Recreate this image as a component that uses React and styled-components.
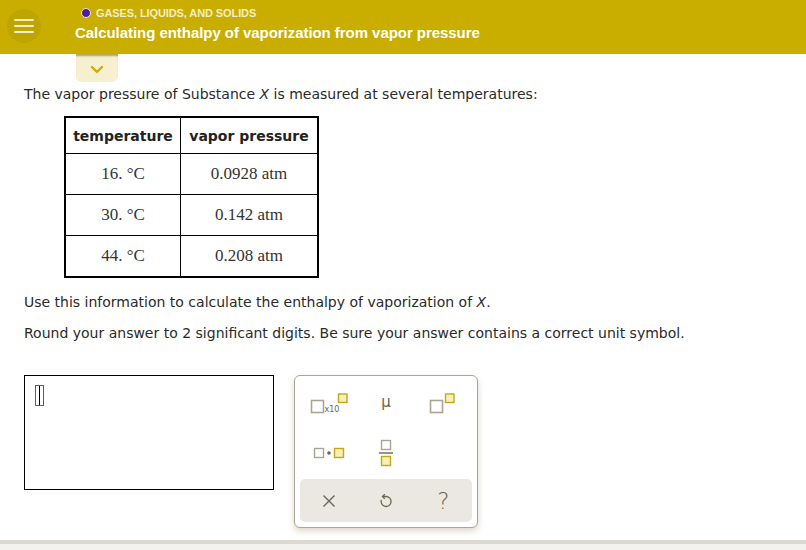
import React from 'react';
import styled, { createGlobalStyle } from 'styled-components';

const Global = createGlobalStyle`
  html, body { margin: 0; padding: 0; background: #fff; }
  body { width: 806px; height: 550px; overflow: hidden; font-family: "DejaVu Sans", Verdana, sans-serif; }
`;

const rows = [
  ['16. °C', '0.0928 atm'],
  ['30. °C', '0.142 atm'],
  ['44. °C', '0.208 atm'],
];

const App = () => (
  <Page>
    <Global />
    <Header>
      <MenuButton>
        <svg width="20" height="14" viewBox="0 0 20 14">
          <path d="M1 1h18M1 7h18M1 13h18" stroke="#f3ecc4" strokeWidth="2" strokeLinecap="round" />
        </svg>
      </MenuButton>
      <Titles>
        <Topic><Dot />GASES, LIQUIDS, AND SOLIDS</Topic>
        <Title>Calculating enthalpy of vaporization from vapor pressure</Title>
      </Titles>
    </Header>
    <TabRow>
      <Tab>
        <svg width="14" height="9" viewBox="0 0 14 9">
          <path d="M2 2l5 5 5-5" stroke="#c9ae00" strokeWidth="2.4" fill="none" strokeLinecap="round" strokeLinejoin="round" />
        </svg>
      </Tab>
    </TabRow>
    <Content>
      <Para>The vapor pressure of Substance <Var>X</Var> is measured at several temperatures:</Para>
      <Table>
        <thead>
          <tr>
            <Th>temperature</Th>
            <Th>vapor pressure</Th>
          </tr>
        </thead>
        <tbody>
          {rows.map(([t, p]) => (
            <tr key={t}>
              <Td>{t}</Td>
              <Td>{p}</Td>
            </tr>
          ))}
        </tbody>
      </Table>
      <Para $top={15}>Use this information to calculate the enthalpy of vaporization of <Var>X</Var>.</Para>
      <Para $top={13}>Round your answer to 2 significant digits. Be sure your answer contains a correct unit symbol.</Para>
      <AnswerRow>
        <AnswerBox>
          <Cursor><CursorBar /></Cursor>
        </AnswerBox>
        <Palette>
          <KeyGrid>
            <Key>
              <svg width="38" height="22" viewBox="0 0 38 22">
                <rect x="1.5" y="7.5" width="12" height="12" fill="#fff" stroke="#a8a594" strokeWidth="1.6" />
                <text x="14.5" y="19" fontSize="8" fontFamily="DejaVu Sans" fill="#6b6650">x10</text>
                <rect x="28.5" y="1" width="8.5" height="8.5" fill="#f7efb8" stroke="#c2a818" strokeWidth="1.4" />
              </svg>
            </Key>
            <Key><Mu>μ</Mu></Key>
            <Key>
              <svg width="28" height="22" viewBox="0 0 28 22">
                <rect x="1.5" y="7.5" width="12" height="12" fill="#fff" stroke="#a8a594" strokeWidth="1.6" />
                <rect x="16.5" y="1" width="8.5" height="8.5" fill="#f7efb8" stroke="#c2a818" strokeWidth="1.4" />
              </svg>
            </Key>
            <Key>
              <svg width="32" height="14" viewBox="0 0 32 14">
                <rect x="1.5" y="2.5" width="9" height="9" fill="#fff" stroke="#a8a594" strokeWidth="1.4" />
                <circle cx="16" cy="7" r="1.8" fill="#6b6650" />
                <rect x="21.5" y="2.5" width="9" height="9" fill="#f7efb8" stroke="#c2a818" strokeWidth="1.4" />
              </svg>
            </Key>
            <Key>
              <svg width="14" height="28" viewBox="0 0 14 28">
                <rect x="2.5" y="1.5" width="9" height="9" fill="#fff" stroke="#a8a594" strokeWidth="1.4" />
                <path d="M0 14h14" stroke="#6b6650" strokeWidth="1.4" />
                <rect x="2.5" y="17.5" width="9" height="9" fill="#f7efb8" stroke="#c2a818" strokeWidth="1.4" />
              </svg>
            </Key>
            <Key />
          </KeyGrid>
          <Actions>
            <Action>
              <svg width="14" height="14" viewBox="0 0 14 14">
                <path d="M1.5 1.5l11 11M12.5 1.5l-11 11" stroke="#6b6650" strokeWidth="1.4" />
              </svg>
            </Action>
            <Action>
              <svg width="14" height="17" viewBox="0 0 14 17">
                <path d="M3.5 4.5H7A5 5 0 1 1 2.3 8" stroke="#6b6650" strokeWidth="1.3" fill="none" />
                <path d="M5.8 2.2L3.5 4.5l2.3 2.3" stroke="#6b6650" strokeWidth="1.3" fill="none" />
              </svg>
            </Action>
            <Action><Help>?</Help></Action>
          </Actions>
        </Palette>
      </AnswerRow>
    </Content>
    <Footer />
  </Page>
);

export default App;

const Page = styled.div`
  width: 806px;
  height: 550px;
  display: flex;
  flex-direction: column;
`;

const Header = styled.header`
  flex-shrink: 0;
  height: 54px;
  background: #c9ae00;
  display: flex;
  align-items: center;
  padding-left: 7px;
  box-sizing: border-box;
`;

const MenuButton = styled.div`
  width: 34px;
  height: 34px;
  border-radius: 50%;
  background: #bfa500;
  display: flex;
  align-items: center;
  justify-content: center;
  margin-right: 34px;
  margin-top: -2px;
`;

const Titles = styled.div`
  display: flex;
  flex-direction: column;
  margin-top: -7px;
`;

const Topic = styled.div`
  display: flex;
  align-items: center;
  font-family: "Liberation Sans", Arial, sans-serif;
  font-weight: 700;
  font-size: 11px;
  letter-spacing: -0.1px;
  color: #f3ecc4;
  margin-left: 6px;
`;

const Dot = styled.span`
  width: 10px;
  height: 10px;
  border-radius: 50%;
  background: #4b1fa0;
  border: 1px solid #f3ecc4;
  box-sizing: border-box;
  margin-right: 5px;
`;

const Title = styled.div`
  font-family: "Liberation Sans", Arial, sans-serif;
  font-weight: 700;
  font-size: 15px;
  letter-spacing: -0.05px;
  color: #fff;
  margin-top: 5px;
`;

const TabRow = styled.div`
  flex-shrink: 0;
  padding-left: 76px;
  height: 28px;
`;

const Tab = styled.div`
  width: 42px;
  height: 28px;
  background: #f6f0d0;
  border-radius: 0 0 6px 6px;
  box-shadow: inset 0 3px 2px -1px rgba(120, 100, 0, 0.55);
  display: flex;
  align-items: center;
  justify-content: center;
  padding-top: 2px;
  box-sizing: border-box;
`;

const Content = styled.div`
  flex: 1;
  padding: 3px 0 0 24px;
`;

const Para = styled.p`
  margin: ${p => p.$top || 0}px 0 0;
  font-family: "DejaVu Sans", Verdana, sans-serif;
  font-size: 14px;
  line-height: 18px;
  color: #2a2a2a;
`;

const Var = styled.i`
  font-family: "DejaVu Sans", Verdana, sans-serif;
`;

const Table = styled.table`
  border-collapse: collapse;
  margin: 13px 0 0 40px;
  border: 2px solid #000;
`;

const Th = styled.th`
  border: 1px solid #000;
  height: 35px;
  padding: 0 6px;
  font-family: "DejaVu Sans", Verdana, sans-serif;
  font-weight: 700;
  font-size: 14px;
  color: #222;
  &:first-child { width: 102px; }
  &:last-child { width: 124px; }
`;

const Td = styled.td`
  border: 1px solid #000;
  height: 40px;
  padding: 0;
  text-align: center;
  font-family: "Liberation Serif", "Times New Roman", serif;
  font-size: 17px;
  color: #333;
`;

const AnswerRow = styled.div`
  display: flex;
  align-items: flex-start;
  gap: 20px;
  margin-top: 33px;
`;

const AnswerBox = styled.div`
  width: 250px;
  height: 115px;
  border: 1px solid #000;
  box-sizing: border-box;
  padding: 9px 0 0 10px;
`;

const Cursor = styled.div`
  width: 9px;
  height: 21px;
  border: 1px solid #c0392b;
  box-sizing: border-box;
  display: flex;
  justify-content: center;
`;

const CursorBar = styled.div`
  width: 1px;
  height: 100%;
  background: #000;
`;

const Palette = styled.div`
  width: 184px;
  height: 153px;
  border: 1px solid #a9a698;
  border-radius: 6px;
  box-sizing: border-box;
  box-shadow: 0 3px 6px rgba(150, 140, 110, 0.35);
  padding: 6px 5px 5px;
  display: flex;
  flex-direction: column;
  background: #fff;
`;

const KeyGrid = styled.div`
  display: grid;
  grid-template-columns: repeat(3, 1fr);
  grid-template-rows: 44px 1fr;
  flex: 1;
`;

const Key = styled.div`
  display: flex;
  align-items: center;
  justify-content: center;
`;

const Mu = styled.span`
  font-family: "DejaVu Sans", sans-serif;
  font-size: 15px;
  color: #6b6650;
  margin-top: -4px;
`;

const Actions = styled.div`
  height: 43px;
  background: #ebe8e2;
  border-radius: 5px;
  display: grid;
  grid-template-columns: repeat(3, 1fr);
`;

const Action = styled.div`
  display: flex;
  align-items: center;
  justify-content: center;
`;

const Help = styled.span`
  font-family: "DejaVu Sans", sans-serif;
  font-size: 23px;
  color: #6b6650;
  font-weight: 300;
`;

const Footer = styled.div`
  flex-shrink: 0;
  height: 10px;
  border-top: 4px solid #dcdad0;
  background: #f3f2ee;
  box-sizing: border-box;
`;
